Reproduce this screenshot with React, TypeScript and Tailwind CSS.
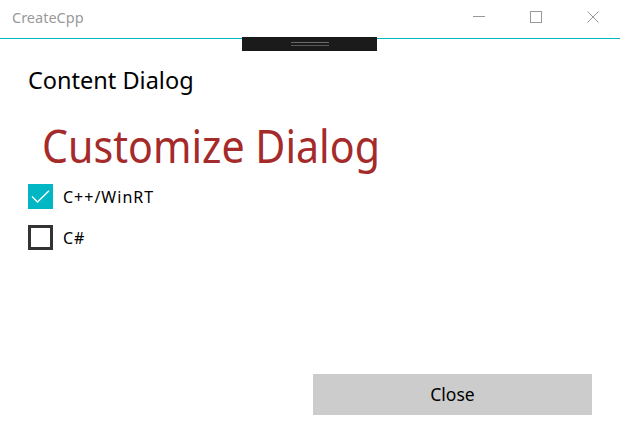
import React from "react";

export default function App() {
  return (
    <div className="relative w-[620px] h-[445px] bg-white overflow-hidden" style={{ fontFamily: '"Noto Sans", "Open Sans", sans-serif' }}>
      {/* Title bar */}
      <div className="flex items-start h-[39px] border-b border-[#00b7c3]">
        <div className="pl-3 pt-[7px] text-[14.5px] leading-[20px] text-[#9a9a9a] flex-1">CreateCpp</div>
        <div className="flex items-start gap-[45px] pt-[11px] pr-[21px]">
          <svg width="12" height="12" viewBox="0 0 12 12"><line x1="0" y1="5.5" x2="12" y2="5.5" stroke="#999" strokeWidth="1" /></svg>
          <svg width="12" height="12" viewBox="0 0 12 12"><rect x="0.5" y="0.5" width="11" height="11" fill="none" stroke="#999" strokeWidth="1" /></svg>
          <svg width="12" height="12" viewBox="0 0 12 12"><path d="M0.5 0.5 L11.5 11.5 M11.5 0.5 L0.5 11.5" stroke="#999" strokeWidth="1" /></svg>
        </div>
      </div>
      {/* drag handle */}
      <div className="absolute left-[242px] top-[37px] w-[135px] h-[14px] bg-[#1b1b1b] flex flex-col items-center justify-center gap-[2px]">
        <div className="w-[38px] h-[1px] bg-[#6a6a6a]" />
        <div className="w-[38px] h-[1px] bg-[#5a5a5a]" />
      </div>

      <div className="pl-[28px] pt-[25px]">
        <div className="text-[23.5px] leading-[32px] text-black">Content Dialog</div>
        <div className="mt-[21px] pl-[14px]">
          <div className="text-[46px] leading-[56px] text-[#a52a2a] whitespace-nowrap origin-left scale-x-[0.895]">Customize Dialog</div>
        </div>
        <div className="mt-[11px] flex items-center gap-[10px] h-[25px]">
          <div className="w-[25px] h-[25px] bg-[#00b7c3] flex items-center justify-center">
            <svg width="19" height="13" viewBox="0 0 19 13"><path d="M1 6.5 L6.5 12 L18 0.8" fill="none" stroke="white" strokeWidth="1.4" /></svg>
          </div>
          <div className="text-[16px] tracking-[1px] text-black">C++/WinRT</div>
        </div>
        <div className="mt-[16px] flex items-center gap-[10px] h-[25px]">
          <div className="w-[25px] h-[25px] border-[3px] border-[#333333] bg-white" />
          <div className="text-[16px] tracking-[1px] text-black">C#</div>
        </div>
      </div>

      <div className="absolute left-[313px] top-[374px] w-[279px] h-[41px] bg-[#cccccc] flex items-center justify-center text-[17.5px] text-black">
        Close
      </div>
    </div>
  );
}
